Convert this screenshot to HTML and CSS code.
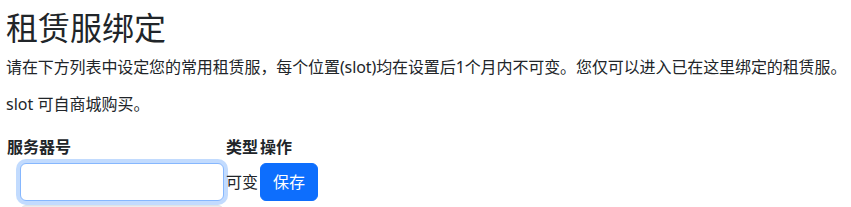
FILE: index.html
```html
<!DOCTYPE html>
<html>
<link rel="stylesheet" href="styles.css">

<head>
    <meta charset="utf-8">
</head>

<body>
    <div class="page">
        <h1 class="title">租赁服绑定</h1>
        <p class="intro">请在下方列表中设定您的常用租赁服，每个位置(slot)均在设置后1个月内不可变。您仅可以进入已在这里绑定的租赁服。</p>
        <p>slot 可自商城购买。</p>

        <table class="slot-table">
            <thead>
                <tr>
                    <th>服务器号</th>
                    <th>类型</th>
                    <th>操作</th>
                </tr>
            </thead>
            <tbody>
                <tr>
                    <td><input type="text" class="form-control is-focus"></td>
                    <td>可变</td>
                    <td><button class="btn-save">保存</button></td>
                </tr>
                <tr>
                    <td><input type="text" class="form-control" disabled></td>
                    <td></td>
                    <td></td>
                </tr>
            </tbody>
        </table>
    </div>
</body>

</html>
```

FILE: styles.css
```css
    body {
        margin: 0;
        background-color: #ffffff;
        color: #212529;
        font-family: "Noto Sans", "Noto Sans CJK SC", sans-serif;
        font-size: 16px;
        line-height: 21px;
    }

    .page {
        padding: 9px 6px 0 6px;
    }

    .title {
        margin: 0 0 10px 0;
        font-size: 32px;
        font-weight: 400;
        line-height: 38px;
    }

    p {
        margin: 0 0 16px 0;
    }

    .intro {
        white-space: nowrap;
        letter-spacing: -0.1px;
    }

    .slot-table {
        border-collapse: collapse;
    }

    .slot-table th {
        padding: 6px 1px 3px 1px;
        text-align: left;
        font-weight: 700;
    }

    .slot-table td {
        padding: 2px 1px;
        vertical-align: middle;
    }

    .form-control {
        display: block;
        box-sizing: border-box;
        width: 204px;
        height: 38px;
        margin-left: 13px;
        padding: 6px 12px;
        font: inherit;
        line-height: 24px;
        color: #212529;
        background-color: #fff;
        border: 1px solid #dee2e6;
        border-radius: 6px;
        outline: none;
    }

    .form-control.is-focus {
        border-color: #86b7fe;
        box-shadow: 0 0 0 4px rgba(13, 110, 253, 0.25);
    }

    .form-control:disabled {
        background-color: #e9ecef;
    }

    .btn-save {
        display: block;
        box-sizing: border-box;
        width: 58px;
        height: 38px;
        padding: 6px 12px;
        font: inherit;
        line-height: 24px;
        color: #fff;
        background-color: #0d6efd;
        border: 1px solid #0d6efd;
        border-radius: 6px;
    }
```
